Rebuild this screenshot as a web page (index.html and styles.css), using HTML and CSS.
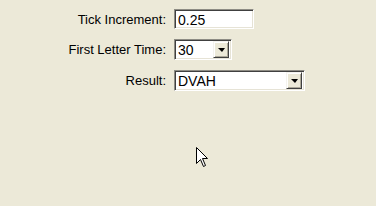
FILE: index.html
```html
<!DOCTYPE html>
<html lang="en">
<head>
  <meta charset="UTF-8" />
  <title>Settings</title>
  <link rel="stylesheet" href="styles.css">
</head>
<body>
  <div class="panel">
    <div class="form-grid">
      <label class="field-label">Tick Increment:</label>
      <div class="text-field wide-80"><span class="field-value">0.25</span></div>

      <label class="field-label">First Letter Time:</label>
      <div class="combo wide-58">
        <span class="field-value">30</span>
        <span class="combo-button"><span class="arrow"></span></span>
      </div>

      <label class="field-label">Result:</label>
      <div class="combo wide-131">
        <span class="field-value">DVAH</span>
        <span class="combo-button"><span class="arrow"></span></span>
      </div>
    </div>

    <!-- mouse pointer captured in the shot -->
    <svg class="pointer" width="13" height="21" viewBox="0 0 13 21">
      <path d="M0.5 0.5 L0.5 16.5 L4.5 12.5 L7.5 19.5 L9.5 18.5 L6.5 11.5 L11.5 11.5 Z" fill="#fff" stroke="#000" stroke-width="1" stroke-linejoin="miter"/>
    </svg>
  </div>
</body>
</html>
```

FILE: styles.css
```css
body {
    margin: 0;
    padding: 0;
    background-color: #ece9d8;
    font-family: "Liberation Sans", Arial, sans-serif;
    font-size: 13px;
    color: #000;
}

.panel {
    position: relative;
    width: 376px;
    height: 206px;
    box-sizing: border-box;
    padding-top: 9px;
}

/* ラベル列 + 入力列 */
.form-grid {
    display: grid;
    grid-template-columns: 166px auto;
    column-gap: 8px;
    row-gap: 10px;
    align-items: center;
    justify-items: start;
}

.field-label {
    justify-self: end;
    white-space: nowrap;
}

/* Windows クラシック風の凹んだ枠 */
.text-field,
.combo {
    display: flex;
    align-items: center;
    height: 20px;
    box-sizing: border-box;
    background-color: #fff;
    border: 1px solid;
    border-color: #8e8c84 #fff #fff #8e8c84;
    box-shadow: inset 1px 1px 0 #404040, inset -1px -1px 0 #e6e3d6;
    padding: 0 2px 0 3px;
}

.combo {
    height: 21px;
    padding-right: 2px;
}

.wide-80 { width: 80px; }
.wide-58 { width: 58px; }
.wide-131 { width: 131px; }

.field-value {
    flex: 1;
    font-size: 14px;
    line-height: 16px;
    padding-top: 1px;
}

/* ドロップダウンのボタン */
.combo-button {
    display: flex;
    align-items: center;
    justify-content: center;
    width: 16px;
    height: 17px;
    box-sizing: border-box;
    background-color: #ece9d8;
    border: 1px solid;
    border-color: #f4f3ee #404040 #404040 #f4f3ee;
    box-shadow: inset 1px 1px 0 #fff, inset -1px -1px 0 #aca899;
}

.arrow {
    width: 0;
    height: 0;
    border-left: 4px solid transparent;
    border-right: 3px solid transparent;
    border-top: 4px solid #000;
    margin-top: 1px;
}

.pointer {
    position: absolute;
    left: 196px;
    top: 147px;
}
```
